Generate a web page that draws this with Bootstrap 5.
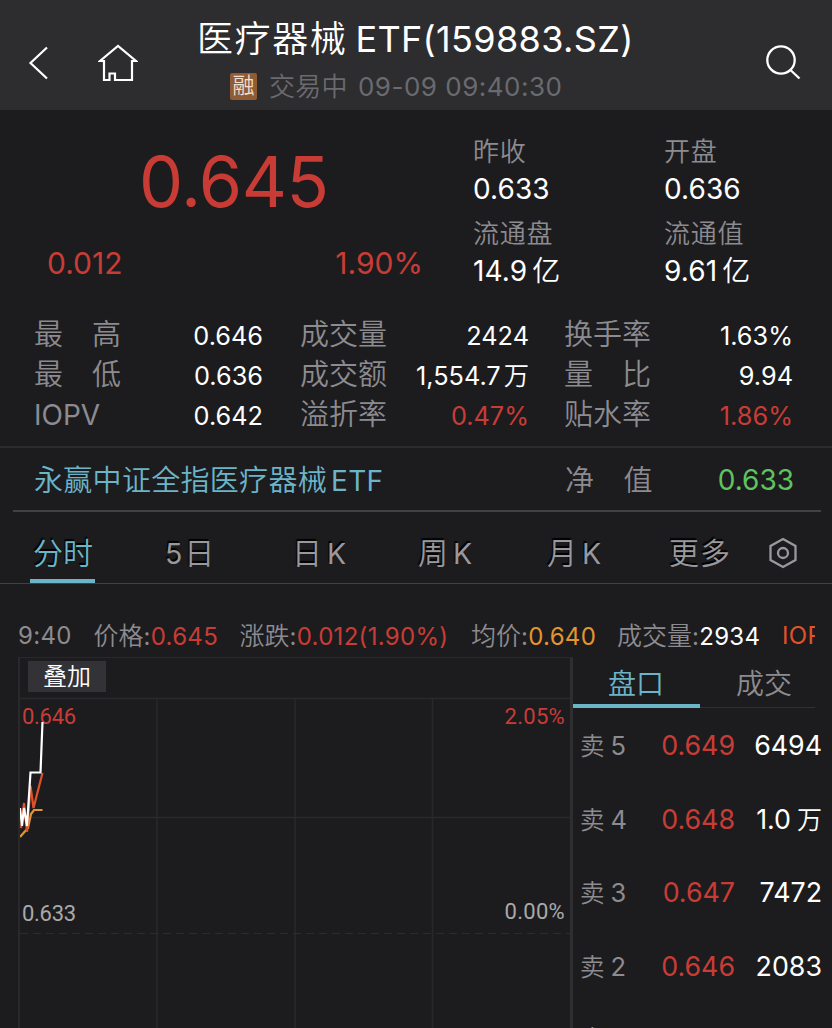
<!DOCTYPE html>
<html lang="zh-CN">
<head>
<meta charset="utf-8">
<meta name="viewport" content="width=device-width, initial-scale=1">
<title>医疗器械ETF(159883.SZ)</title>
<link href="https://cdn.jsdelivr.net/npm/bootstrap@5.3.0/dist/css/bootstrap.min.css" rel="stylesheet">
<style>
:root{--ink:#1c1c1e;--dim:#8c8b90;--up:#c93c36;--down:#5fc35f;--accent:#6cb4c8}
body{background:var(--ink);color:#fff;font-family:Inter,"Noto Sans CJK SC",sans-serif}
.app{width:832px;height:1028px}
.dim{color:var(--dim)}.up{color:var(--up)}.down{color:var(--down)}.accent{color:var(--accent)}
.zh{font-weight:350}
.topbar{height:110px;background:#2d2d2f}
.topbar .side{width:166px;padding-left:28px;padding-top:15px}
.topbar .home{margin-left:48px}
.topbar .end{width:67px;padding-top:15px}
.title{font-size:36px;line-height:48px;padding:15px 0 0 31px;letter-spacing:.35px;font-weight:400}
.title .zh{letter-spacing:1.6px;margin-right:8px}
.sub{font-size:26px;line-height:34px;color:#6a6a6f;margin-top:7px;padding-left:64px}
.sub .chip{width:27px;height:27px;background:#8f5c35;color:#f3dfd0;font-size:22px;line-height:25px;border-radius:2px;margin-right:12px;margin-top:-2px}
.sub .zh+.zh{letter-spacing:.3px}
.sub time{letter-spacing:.5px;margin-left:10px}
.quote{height:204px}
.quote .main{width:473px}
.price{font-size:70px;line-height:80px;padding:32px 0 0 139px;letter-spacing:-.5px}
.delta{font-size:30px;line-height:40px;margin-top:21px;padding:0 50px 0 47px}
.facts{display:grid;grid-template-columns:191px 1fr;padding-top:22px;align-content:start}
.facts dt{font-size:26px;line-height:40px;font-weight:350;letter-spacing:.8px}
.facts dd{font-size:28px;line-height:34px;margin:0 0 8px;letter-spacing:.1px}
.facts .zh{margin-left:5px}
.stats{display:grid;grid-template-columns:266px 264px 229px;grid-auto-rows:40px;padding:2px 0 0 34px;height:134px;border-bottom:2px solid #2c2c2e}
.stats>div,.fund{font-size:25.3px;line-height:40px}
.stats>div:nth-child(3n+1){padding-right:37px}
.stats>div:nth-child(3n+2){padding-right:35px}
.stats .zh{margin-left:3px}
.stats .k,.fund .k{font-size:29px;font-weight:350;position:relative;top:-1px}
.stats .iopv{font-size:28px;font-weight:400}
.fund{display:grid;grid-template-columns:531px 229px;margin:0 11px 0 13px;padding:0 0 0 21px;height:64px;border-bottom:2px solid #424244}
.fund>*{line-height:65px}
.fund .k{letter-spacing:.3px;top:0}
.fund .down{font-size:28px}
.fund .latin{margin-left:4px;font-size:28px;font-weight:400}
.periods{display:grid;grid-template-columns:135px 127px 126px 129px 122px 100px 1fr;padding-left:30px;height:72px;border-bottom:1px solid #414143;font-size:30px;color:#99989d;text-shadow:-1px -2px 1px #000}
.periods a{color:inherit;text-decoration:none;line-height:82px;height:71px;font-weight:350;white-space:nowrap;justify-self:start}
.periods b{font-weight:400;font-size:28.5px;margin-left:5px}
.periods .first{margin:0 2px 0 0}
.periods .more{letter-spacing:1px}
.periods .on{color:var(--accent);border-bottom:4px solid var(--accent);padding:0 2px 0 3px}
.periods svg{margin:25px 0 0 -1px}
.ticker{display:grid;grid-template-columns:75.5px 146px 231.5px 146px 165px 1fr;height:73px;padding-left:18px;padding-top:32px;width:815px;font-size:24px;line-height:40px;white-space:nowrap;letter-spacing:.3px}
.ticker .zh{font-size:25px;letter-spacing:0}
.plot{width:555px;height:371px;margin-left:18px;border-left:2px solid #29292b;border-right:3px solid #2e2e30;border-top:1px solid #29292b}
.plot .over{left:8px;top:3px;width:78px;height:31px;background:#323237;font-size:24px;line-height:31px}
.tag{font-family:Roboto,sans-serif;font-size:22px;line-height:24px;letter-spacing:-.3px}
.tag.pct{letter-spacing:.3px}
.book{width:259px;font-size:26px}
.book nav{height:51px;border-bottom:1px solid #303032;width:242px;font-size:28px;line-height:55px;font-weight:350}
.book nav span{width:128px;height:51px;text-align:center;flex-shrink:0;margin-left:-1px;margin-right:1px}
.book nav .on{border-bottom:4px solid var(--accent)}
.level{display:grid;grid-template-columns:66px 89px 87px;padding-left:7px;height:73.5px;line-height:75px}
.level .n{font-size:25.5px;margin-left:6px}
.level .px{text-align:right;font-size:26.8px}
.level .zh{font-size:24.5px}
.level .px .zh{margin-left:6px;font-size:25px}
</style>
</head>
<body>
<main class="app overflow-hidden">
  <header class="topbar d-flex">
    <div class="side d-flex align-items-center flex-shrink-0">
      <svg width="22" height="34" viewBox="0 0 22 34" fill="none" stroke="#fff" stroke-width="2.200"><path d="M19 1.500 2.500 17 19 32.500"/></svg>
      <svg class="home" width="40" height="40" viewBox="0 0 40 40" fill="none" stroke="#fff" stroke-width="2.200"><path d="M6 18H2L20 3l18 15h-4v19H17v-6.500h-5.500V37H6z"/></svg>
    </div>
    <div class="flex-fill">
      <h1 class="title m-0 text-nowrap"><span class="zh">医疗器械</span>ETF(159883.SZ)</h1>
      <div class="sub d-flex align-items-center"><span class="chip zh text-center">融</span><span class="zh">交易中</span><time>09-09 09:40:30</time></div>
    </div>
    <div class="end d-flex align-items-center flex-shrink-0">
      <svg width="36" height="36" viewBox="0 0 36 36" fill="none" stroke="#fff" stroke-width="2.300"><circle cx="16" cy="15" r="13.700"/><path d="m25.500 25 9 8.500"/></svg>
    </div>
  </header>

  <section class="quote d-flex">
    <div class="main flex-shrink-0">
      <div class="price up">0.645</div>
      <div class="delta up d-flex justify-content-between"><span>0.012</span><span>1.90%</span></div>
    </div>
    <dl class="facts flex-fill m-0">
      <div><dt class="dim">昨收</dt><dd>0.633</dd></div>
      <div><dt class="dim">开盘</dt><dd>0.636</dd></div>
      <div><dt class="dim">流通盘</dt><dd>14.9<span class="zh">亿</span></dd></div>
      <div><dt class="dim">流通值</dt><dd>9.61<span class="zh">亿</span></dd></div>
    </dl>
  </section>

  <section class="stats">
    <div class="d-flex justify-content-between"><span class="k dim">最　高</span><span>0.646</span></div>
    <div class="d-flex justify-content-between"><span class="k dim">成交量</span><span>2424</span></div>
    <div class="d-flex justify-content-between"><span class="k dim">换手率</span><span>1.63%</span></div>
    <div class="d-flex justify-content-between"><span class="k dim">最　低</span><span>0.636</span></div>
    <div class="d-flex justify-content-between"><span class="k dim">成交额</span><span>1,554.7<span class="zh">万</span></span></div>
    <div class="d-flex justify-content-between"><span class="k dim">量　比</span><span>9.94</span></div>
    <div class="d-flex justify-content-between"><span class="k iopv dim">IOPV</span><span>0.642</span></div>
    <div class="d-flex justify-content-between"><span class="k dim">溢折率</span><span class="up">0.47%</span></div>
    <div class="d-flex justify-content-between"><span class="k dim">贴水率</span><span class="up">1.86%</span></div>
  </section>

  <section class="fund">
    <span class="k accent">永赢中证全指医疗器械<span class="latin">ETF</span></span>
    <div class="d-flex justify-content-between"><span class="k dim">净　值</span><span class="down">0.633</span></div>
  </section>

  <nav class="periods">
    <a class="on">分时</a><a><b class="first">5</b>日</a><a>日<b>K</b></a><a>周<b>K</b></a><a>月<b>K</b></a><a class="more">更多</a>
    <svg width="30" height="32" viewBox="0 0 30 32" fill="none" stroke="#99989d" stroke-width="2.300"><path d="M15 2 27.500 9v14L15 30 2.500 23V9z"/><circle cx="15" cy="16" r="5"/></svg>
  </nav>

  <div class="ticker overflow-hidden dim">
    <span>9:40</span>
    <span><span class="zh">价格</span>:<span class="up">0.645</span></span>
    <span><span class="zh">涨跌</span>:<span class="up">0.012(1.90%)</span></span>
    <span><span class="zh">均价</span>:<span style="color:#e3952f">0.640</span></span>
    <span><span class="zh">成交量</span>:<span class="text-white">2934</span></span>
    <span class="overflow-hidden" style="color:#e0532b">IOPV</span>
  </div>

  <div class="d-flex">
    <section class="plot position-relative flex-shrink-0">
      <svg class="d-block" width="550" height="370" viewBox="20 658 550 370" fill="none">
        <path stroke="#29292b" stroke-width="1.500" d="M20 698.500H570M20 817.500H570M157 699V1028M295 699V1028M432.500 699V1028"/>
        <path stroke="#2c2c2e" stroke-dasharray="8 5" d="M20 933.500H570"/>
      </svg>
      <span class="over zh position-absolute text-center">叠加</span>
      <span class="tag up position-absolute" style="left:2px;top:47px">0.646</span>
      <span class="tag pct up position-absolute" style="right:5px;top:47px">2.05%</span>
      <span class="tag position-absolute" style="left:2px;top:244px;color:#a9a9ac">0.633</span>
      <span class="tag pct position-absolute" style="right:5px;top:242px;color:#a9a9ac">0.00%</span>
      <svg class="position-absolute top-0 start-0" width="550" height="370" viewBox="20 658 550 370" fill="none" stroke-width="2.200">
        <path stroke="#e2952f" d="M20 837 28 828 31 814 34 810H42.500"/>
        <path stroke="#df5229" d="M21 828 24 803 27 832 30.500 786 33.500 808 42.500 773"/>
        <path stroke="#fff" d="M20 808 22 826 24 808 27 826 30.500 772.500H40.500L42.500 722"/>
      </svg>
    </section>
    <section class="book">
      <nav class="d-flex dim"><span class="on accent">盘口</span><span>成交</span></nav>
      <div class="level"><span class="dim"><span class="zh">卖</span><span class="n">5</span></span><span class="px up">0.649</span><span class="px">6494</span></div>
      <div class="level"><span class="dim"><span class="zh">卖</span><span class="n">4</span></span><span class="px up">0.648</span><span class="px">1.0<span class="zh">万</span></span></div>
      <div class="level"><span class="dim"><span class="zh">卖</span><span class="n">3</span></span><span class="px up">0.647</span><span class="px">7472</span></div>
      <div class="level"><span class="dim"><span class="zh">卖</span><span class="n">2</span></span><span class="px up">0.646</span><span class="px">2083</span></div>
      <div class="level"><span class="dim zh">卖</span></div>
    </section>
  </div>
</main>
<script src="https://cdn.jsdelivr.net/npm/bootstrap@5.3.0/dist/js/bootstrap.bundle.min.js"></script>
</body>
</html>
